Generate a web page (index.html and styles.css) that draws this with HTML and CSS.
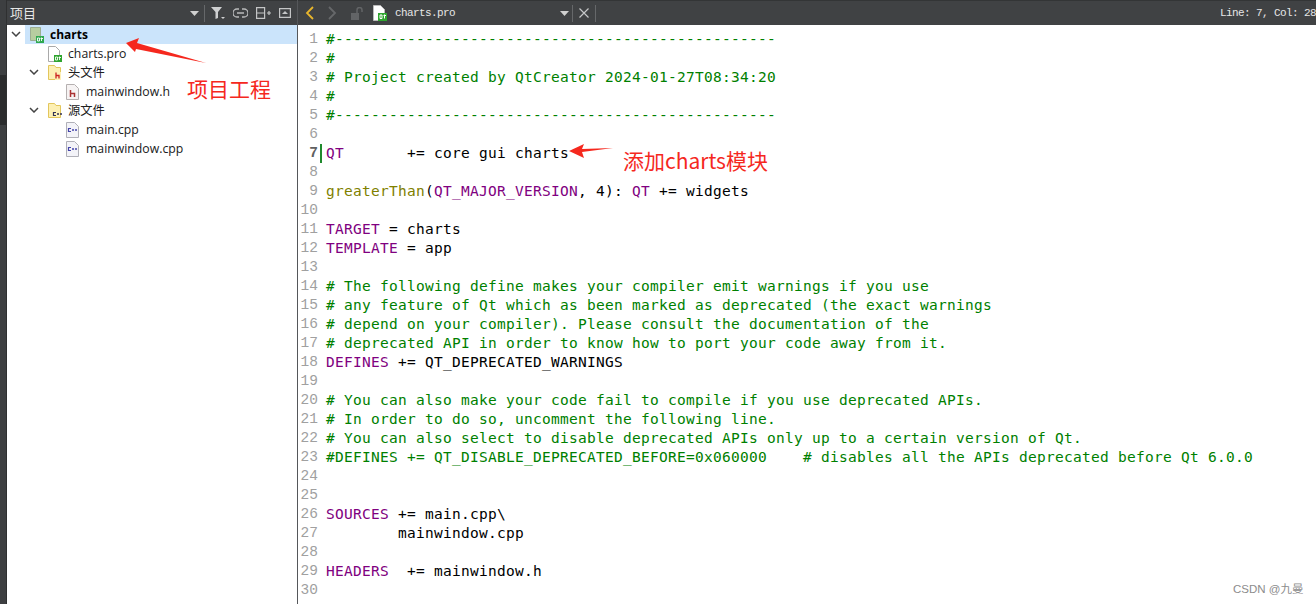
FILE: index.html
```html
<!DOCTYPE html>
<html lang="zh-CN">
<head>
<meta charset="utf-8">
<title>charts.pro</title>
<link rel="stylesheet" href="styles.css">
</head>
<body>
<div class="app">
  <div class="rail"><div class="rail-mark"></div></div>
  <aside class="side">
    <header class="bar side-bar">
      <span class="bar-title">项目</span>
      <svg class="ic caret" width="9" height="5" viewBox="0 0 9 5"><path d="M0 0h9L4.500 5z" fill="#d0d0d0"/></svg>
      <span class="sep"></span>
      <svg class="ic" width="14" height="14" viewBox="0 0 14 14"><path d="M0 1h11L7 6v6L4.500 13V6z" fill="#cfd0d1"/><path d="M10 11h4l-2 2z" fill="#cfd0d1"/></svg>
      <svg class="ic" width="15" height="10" viewBox="0 0 15 10" fill="none" stroke="#b9babb" stroke-width="1.300"><path d="M6 1H4a4 4 0 0 0 0 8h2M9 1h2a4 4 0 0 1 0 8H9M4 5h7"/></svg>
      <svg class="ic" width="15" height="12" viewBox="0 0 15 12" fill="none" stroke="#c4c5c6" stroke-width="1.200"><path d="M.6.600h8v10.800h-8zM.6 6h8M11 6h4M13 4v4"/></svg>
      <svg class="ic ic-last" width="12" height="10" viewBox="0 0 12 10"><path d="M.6.600h10.800v8.800H.6z" fill="none" stroke="#c4c5c6" stroke-width="1.200"/><path d="M6 3l3 3H3z" fill="#c4c5c6"/></svg>
    </header>
    <ul class="tree">
      <li class="row">
        <svg class="chev" width="10" height="6" viewBox="0 0 10 6"><path d="M1 1l4 4 4-4" fill="none" stroke="#444" stroke-width="1.500"/></svg>
        <div class="cell selected">
          <svg class="file" width="14" height="16" viewBox="0 0 14 16"><path d="M.5.500h10v13H.5z" fill="#b7cda0" stroke="#9cae92"/><rect x="6" y="9" width="8" height="7" fill="#2fa84f"/><path d="M7.500 11h2v3h-2zM11.500 10.500V14M10.500 11.500h2.500" fill="none" stroke="#fff" stroke-width=".9"/></svg>
          <span class="name bold">charts</span>
        </div>
      </li>
      <li class="row lvl1">
        <span class="chev-space"></span>
        <div class="cell">
          <svg class="file" width="14" height="16" viewBox="0 0 14 16"><path d="M.5.500h7l4 4v11H.5z" fill="#fff" stroke="#a9a9a9"/><rect x="6" y="9" width="8" height="7" fill="#2fa52f"/><path d="M7.500 11h2v3h-2zM11.500 10.500V14M10.500 11.500h2.500" fill="none" stroke="#fff" stroke-width=".9"/></svg>
          <span class="name">charts.pro</span>
        </div>
      </li>
      <li class="row lvl1">
        <svg class="chev" width="10" height="6" viewBox="0 0 10 6"><path d="M1 1l4 4 4-4" fill="none" stroke="#444" stroke-width="1.500"/></svg>
        <div class="cell">
          <svg class="file" width="14" height="16" viewBox="0 0 14 16"><path d="M.5.500h6l1.500 2h4.500v12H.5z" fill="#fdf0b4" stroke="#e3c65c"/><rect x="7" y="7" width="6" height="8" fill="#fdf0b4"/><path d="M8 7.500v6M8 10.500h3v3" fill="none" stroke="#c22" stroke-width="1.300"/></svg>
          <span class="name">头文件</span>
        </div>
      </li>
      <li class="row lvl2">
        <span class="chev-space"></span>
        <div class="cell">
          <svg class="file" width="14" height="16" viewBox="0 0 14 16"><path d="M.5.500h8l4 4v11H.5z" fill="#f6f3f3" stroke="#b5b0b0"/><path d="M4.500 6v7M4.500 9.500h4v3.500" fill="none" stroke="#a33" stroke-width="1.500"/></svg>
          <span class="name">mainwindow.h</span>
        </div>
      </li>
      <li class="row lvl1">
        <svg class="chev" width="10" height="6" viewBox="0 0 10 6"><path d="M1 1l4 4 4-4" fill="none" stroke="#444" stroke-width="1.500"/></svg>
        <div class="cell">
          <svg class="file" width="14" height="16" viewBox="0 0 14 16"><path d="M.5.500h6l1.500 2h4.500v12H.5z" fill="#fdf0b4" stroke="#e3c65c"/><path d="M8 9.500H5.500v3H8" fill="none" stroke="#335" stroke-width="1.200"/><path d="M9 11h2M10 10v2M12 11h2M13 10v2" stroke="#335"/></svg>
          <span class="name">源文件</span>
        </div>
      </li>
      <li class="row lvl2">
        <span class="chev-space"></span>
        <div class="cell">
          <svg class="file" width="14" height="16" viewBox="0 0 14 16"><path d="M.5.500h8l4 4v11H.5z" fill="#f3f3f8" stroke="#b0b0b8"/><path d="M5 6.500H2.500v3H5" fill="none" stroke="#44a" stroke-width="1.200"/><path d="M6 8h2M7 7v2M9 8h2M10 7v2" stroke="#44a"/></svg>
          <span class="name">main.cpp</span>
        </div>
      </li>
      <li class="row lvl2">
        <span class="chev-space"></span>
        <div class="cell">
          <svg class="file" width="14" height="16" viewBox="0 0 14 16"><path d="M.5.500h8l4 4v11H.5z" fill="#f3f3f8" stroke="#b0b0b8"/><path d="M5 6.500H2.500v3H5" fill="none" stroke="#44a" stroke-width="1.200"/><path d="M6 8h2M7 7v2M9 8h2M10 7v2" stroke="#44a"/></svg>
          <span class="name">mainwindow.cpp</span>
        </div>
      </li>
    </ul>
    <svg class="arrow arrow-a" width="82" height="26" viewBox="0 0 82 26"><path d="M0 5L13 0 11 5 80 25 10 11 9 14z" fill="#f5281e"/></svg>
    <span class="note note-a">项目工程</span>
  </aside>
  <main class="editor">
    <header class="bar edit-bar">
      <svg class="nav" width="9" height="14" viewBox="0 0 9 14"><path d="M8 1L2 7l6 6" fill="none" stroke="#e8b62c" stroke-width="1.800"/></svg>
      <svg class="nav" width="9" height="14" viewBox="0 0 9 14"><path d="M1 1l6 6-6 6" fill="none" stroke="#66686a" stroke-width="1.800"/></svg>
      <svg class="lock" width="13" height="13" viewBox="0 0 13 13"><rect x="0" y="6" width="8" height="7" fill="#626466"/><path d="M6 6V3a2.500 2.500 0 0 1 5 0v2" fill="none" stroke="#626466" stroke-width="1.500"/></svg>
      <svg class="tabfile" width="14" height="16" viewBox="0 0 14 16"><path d="M.5.500h7l4 4v11H.5z" fill="#fff" stroke="#bbb"/><rect x="5" y="8" width="9" height="8" fill="#2fa52f"/><path d="M7 10h2v3.500H7zM11.500 9.500v4M10.500 10.500h2.500" fill="none" stroke="#fff"/></svg>
      <span class="tabname">charts.pro</span>
      <svg class="ic caret caret-tab" width="9" height="5" viewBox="0 0 9 5"><path d="M0 0h9L4.500 5z" fill="#d0d0d0"/></svg>
      <span class="sep"></span>
      <svg class="close" width="10" height="10" viewBox="0 0 10 10"><path d="M.5.500l9 9M9.500.500l-9 9" stroke="#c6c7c8" stroke-width="1.200"/></svg>
      <span class="sep"></span>
      <span class="pos">Line: 7, Col: 28</span>
    </header>
    <div class="code">
      <div class="ln"><span class="no">1</span><code class="c">#-------------------------------------------------</code></div>
      <div class="ln"><span class="no">2</span><code class="c">#</code></div>
      <div class="ln"><span class="no">3</span><code class="c"># Project created by QtCreator 2024-01-27T08:34:20</code></div>
      <div class="ln"><span class="no">4</span><code class="c">#</code></div>
      <div class="ln"><span class="no">5</span><code class="c">#-------------------------------------------------</code></div>
      <div class="ln"><span class="no">6</span><code></code></div>
      <div class="ln cur"><span class="no">7</span><code><span class="v">QT</span>       += core gui charts</code></div>
      <div class="ln"><span class="no">8</span><code></code></div>
      <div class="ln"><span class="no">9</span><code><span class="f">greaterThan</span>(<span class="v">QT_MAJOR_VERSION</span>, 4): <span class="v">QT</span> += widgets</code></div>
      <div class="ln"><span class="no">10</span><code></code></div>
      <div class="ln"><span class="no">11</span><code><span class="v">TARGET</span> = charts</code></div>
      <div class="ln"><span class="no">12</span><code><span class="v">TEMPLATE</span> = app</code></div>
      <div class="ln"><span class="no">13</span><code></code></div>
      <div class="ln"><span class="no">14</span><code class="c"># The following define makes your compiler emit warnings if you use</code></div>
      <div class="ln"><span class="no">15</span><code class="c"># any feature of Qt which as been marked as deprecated (the exact warnings</code></div>
      <div class="ln"><span class="no">16</span><code class="c"># depend on your compiler). Please consult the documentation of the</code></div>
      <div class="ln"><span class="no">17</span><code class="c"># deprecated API in order to know how to port your code away from it.</code></div>
      <div class="ln"><span class="no">18</span><code><span class="v">DEFINES</span> += QT_DEPRECATED_WARNINGS</code></div>
      <div class="ln"><span class="no">19</span><code></code></div>
      <div class="ln"><span class="no">20</span><code class="c"># You can also make your code fail to compile if you use deprecated APIs.</code></div>
      <div class="ln"><span class="no">21</span><code class="c"># In order to do so, uncomment the following line.</code></div>
      <div class="ln"><span class="no">22</span><code class="c"># You can also select to disable deprecated APIs only up to a certain version of Qt.</code></div>
      <div class="ln"><span class="no">23</span><code class="c">#DEFINES += QT_DISABLE_DEPRECATED_BEFORE=0x060000    # disables all the APIs deprecated before Qt 6.0.0</code></div>
      <div class="ln"><span class="no">24</span><code></code></div>
      <div class="ln"><span class="no">25</span><code></code></div>
      <div class="ln"><span class="no">26</span><code><span class="v">SOURCES</span> += main.cpp\</code></div>
      <div class="ln"><span class="no">27</span><code>        mainwindow.cpp</code></div>
      <div class="ln"><span class="no">28</span><code></code></div>
      <div class="ln"><span class="no">29</span><code><span class="v">HEADERS</span>  += mainwindow.h</code></div>
      <div class="ln"><span class="no">30</span><code></code></div>
    </div>
    <svg class="arrow arrow-b" width="44" height="14" viewBox="0 0 44 14"><path d="M0 7L15 0 13 5 44 4 13 8 15 14z" fill="#f5281e"/></svg>
    <span class="note note-b">添加charts模块</span>
    <span class="mark">CSDN @九曼</span>
  </main>
</div>
</body>
</html>
```

FILE: styles.css
```css
* { box-sizing: border-box; }
html, body { margin: 0; height: 100%; overflow: hidden; background: #fff; }
.app { display: flex; height: 604px; position: relative; }
.rail { width: 7px; background: #3d3f41; border-right: 1px solid #2f3031; padding-top: 75px; flex: none; }
.rail-mark { height: 50px; background: #2b2c2d; }
.side { width: 291px; flex: none; border-right: 1px solid #55575a; }
.editor { flex: 1; min-width: 0; }
.bar { height: 25px; background: #404244; border-top: 1px solid #333536; display: flex; align-items: center; color: #e8e8e8; }
.side-bar { padding: 0 6px 0 3px; }
.bar-title { font: 13px "Noto Sans CJK SC", sans-serif; flex: 1; padding-bottom: 2px; }
.ic { margin-right: 8px; flex: none; }
.ic-last { margin-right: 0; }
.caret { margin-right: 5px; }
.sep { width: 1px; height: 17px; background: #66686a; margin-right: 6px; flex: none; }
.tree { list-style: none; margin: 0; padding: 0; }
.row { display: flex; height: 19px; align-items: stretch; }
.lvl1 { padding-left: 18px; }
.lvl2 { padding-left: 36px; }
.chev, .chev-space { width: 18px; flex: none; }
.chev { height: 19px; padding: 6px 4px 7px; }
.cell { flex: 1; display: flex; align-items: center; padding-left: 5px; gap: 6px; min-width: 0; }
.selected { background: #cbe4fb; }
.file { flex: none; }
.name { font: 12.250px/19px "Open Sans", "Noto Sans CJK SC", sans-serif; color: #202020; white-space: nowrap; }
.bold { font-size: 12px; font-weight: 700; color: #000; }
.edit-bar { padding-left: 7px; }
.nav { margin-right: 14px; flex: none; }
.lock { margin: 0 9px 0 0; flex: none; }
.tabfile { margin-right: 8px; flex: none; }
.tabname, .pos { font: 11px/1 "Liberation Mono", monospace; letter-spacing: -.6px; color: #e6e6e6; white-space: nowrap; }
.tabname { width: 165px; flex: none; }
.caret-tab { margin-right: 3px; }
.close { margin-right: 6px; flex: none; }
.pos { margin-left: auto; }
.code { padding-top: 5px; height: 579px; overflow: hidden; }
.ln { display: flex; height: 19px; position: relative; }
.no { width: 20px; flex: none; text-align: right; font: 14.500px/19px "Liberation Mono", monospace; color: #a0a0a0; }
code { display: block; padding-left: 8px; font: 14.500px/19px "DejaVu Sans Mono", monospace; letter-spacing: .27px; white-space: pre; color: #000; }
.cur .no { color: #606060; font-weight: 700; }
.cur::before { content: ""; position: absolute; left: 22px; top: 0; width: 2px; height: 19px; background: #1f8a2d; }
.c { color: #008000; }
.v { color: #800080; }
.f { color: #808000; }
.arrow { position: absolute; }
.arrow-a { left: 126px; top: 38px; }
.arrow-b { left: 569px; top: 144px; }
.note { position: absolute; color: #f5281e; font: 21px/1 "Noto Sans CJK SC", sans-serif; white-space: nowrap; }
.note-a { left: 187px; top: 78px; }
.note-b { left: 623px; top: 150px; }
.mark { position: absolute; left: 1233px; top: 582px; font: 11.500px/14px "Liberation Sans", "Noto Sans CJK SC", sans-serif; color: #8c8c8c; }
```
